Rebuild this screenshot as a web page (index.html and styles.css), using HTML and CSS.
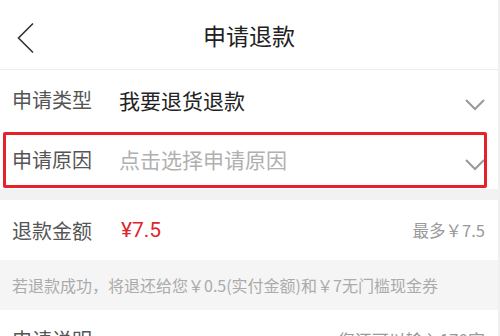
FILE: index.html
```html
<!DOCTYPE html>
<html lang="zh-CN">
<head>
<meta charset="utf-8">
<title>申请退款</title>
<link rel="stylesheet" href="styles.css">
</head>
<body>
<div class="page">
  <header class="header">
    <svg class="back" width="20" height="32" viewBox="0 0 20 32"><path d="M17 1.5 L2.5 16 L17 30.5" fill="none" stroke="#333" stroke-width="1.6"/></svg>
    <h1 class="title">申请退款</h1>
  </header>
  <div class="row">
    <span class="label">申请类型</span>
    <span class="value">我要退货退款</span>
    <svg class="chev" width="20" height="12" viewBox="0 0 20 12"><path d="M1 1 L10 10 L19 1" fill="none" stroke="#999" stroke-width="2"/></svg>
  </div>
  <div class="row reason">
    <span class="label">申请原因</span>
    <span class="value placeholder">点击选择申请原因</span>
    <svg class="chev" width="20" height="12" viewBox="0 0 20 12"><path d="M1 1 L10 10 L19 1" fill="none" stroke="#999" stroke-width="2"/></svg>
    <div class="highlight"></div>
  </div>
  <div class="gap"></div>
  <div class="row amount-row">
    <span class="label">退款金额</span>
    <span class="amount">¥7.5</span>
    <span class="max">最多￥7.5</span>
  </div>
  <div class="note">若退款成功，将退还给您￥0.5(实付金额)和￥7无门槛现金券</div>
  <div class="row">
    <span class="label">申请说明</span>
    <span class="max remain">您还可以输入170字</span>
  </div>
</div>
</body>
</html>
```
FILE: styles.css
```css
html, body {
  margin: 0;
  padding: 0;
  background: #fff;
}
body {
  font-family: "Noto Sans CJK SC", "Noto Sans", "Liberation Sans", sans-serif;
  width: 500px;
  height: 336px;
  overflow: hidden;
}
.page {
  border-right: 2px solid #f0f0f0;
  box-sizing: border-box;
  width: 500px;
}
.header {
  position: relative;
  height: 69px;
  border-bottom: 1px solid #ececec;
  display: flex;
  align-items: center;
  justify-content: center;
}
.back {
  position: absolute;
  left: 16px;
  top: 22px;
}
.title {
  margin: 0;
  font-size: 23px;
  font-weight: normal;
  color: #222;
  line-height: 1;
  margin-top: 2px;
}
.row {
  position: relative;
  height: 59px;
  display: flex;
  align-items: center;
  padding: 0 13px 0 12px;
}
.label {
  width: 107px;
  font-size: 20px;
  color: #555;
  flex: none;
}
.value {
  flex: 1;
  font-size: 21px;
  color: #222;
}
.placeholder {
  color: #b0b0b0;
}
.chev {
  flex: none;
  margin-top: 11px;
}
.reason {
  height: 60px;
}
.highlight {
  position: absolute;
  left: 3px;
  top: 3px;
  right: 11px;
  bottom: 1px;
  border: 3px solid #e6212b;
  border-radius: 2px;
}
.gap {
  height: 11px;
  background: #f2f2f2;
}
.amount-row {
  height: 60px;
}
.amount {
  flex: 1;
  font-family: "Roboto", "Liberation Sans", sans-serif;
  font-size: 21px;
  color: #e0262b;
  margin-left: 2px;
}
.max {
  font-size: 16.5px;
  color: #9a9a9a;
}
.remain {
  margin-left: auto;
  font-size: 17px;
}
.note {
  height: 50px;
  background: #f5f5f5;
  display: flex;
  align-items: center;
  padding-left: 12px;
  font-size: 16px;
  color: #ababab;
}
```
